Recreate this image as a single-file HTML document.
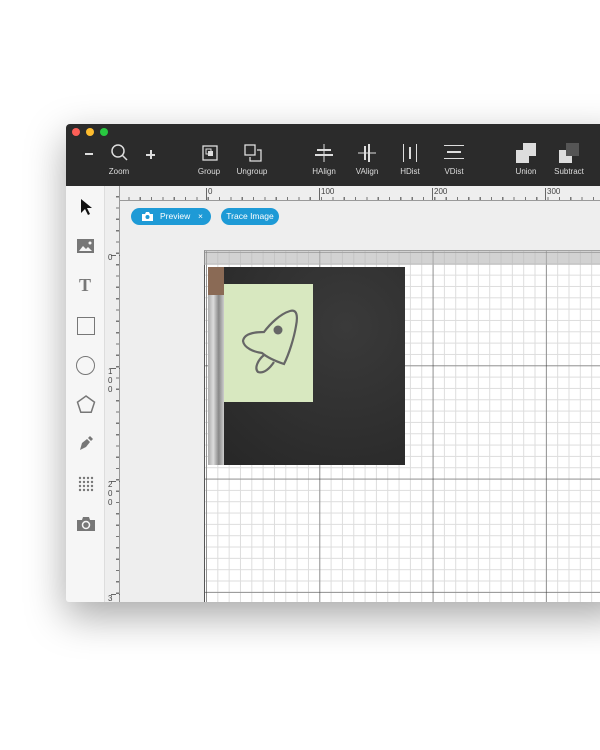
<!DOCTYPE html>
<html><head><meta charset="utf-8"><style>
*{margin:0;padding:0;box-sizing:border-box}
body{width:600px;height:750px;background:#fff;position:relative;overflow:hidden;font-family:"Liberation Sans",sans-serif}
.win{position:absolute;left:66px;top:124px;width:560px;height:478px;background:#eeeeee;box-shadow:0 14px 40px rgba(0,0,0,.35);border-radius:4px 0 0 3px;overflow:hidden}
.tb{position:absolute;left:0;top:0;right:0;height:62px;background:#2b2b2b}
.dot{position:absolute;top:4px;width:8px;height:8px;border-radius:50%}
.lbl{position:absolute;top:43px;color:#ddd;font-size:8px;transform:translateX(-50%);white-space:nowrap}
.ic{position:absolute}
.left{position:absolute;left:0;top:62px;width:39px;bottom:0;background:#f6f6f6;border-right:1px solid #ddd}
.vr{position:absolute;left:39px;top:62px;width:15px;bottom:0;background:#eee;border-right:1px solid #999}
.hr{position:absolute;left:54px;top:62px;right:0;height:15px;background:#eee;border-bottom:1px solid #999}
.pill{position:absolute;top:84px;height:17px;border-radius:9px;background:#1e9ad6;color:#fff;font-size:8.5px;line-height:17px}
.ws{position:absolute;left:138px;top:126px;right:0;bottom:0;background-color:#fff;border-left:1px solid #555;border-top:1px solid #888;
background-image:linear-gradient(90deg,rgba(0,0,0,.35) 1px,transparent 1px),linear-gradient(rgba(0,0,0,.35) 1px,transparent 1px),linear-gradient(90deg,#ddd 1px,transparent 1px),linear-gradient(#ddd 1px,transparent 1px);
background-size:113.3px 113.3px,113.3px 113.3px,11.33px 11.33px,11.33px 11.33px;background-position:1px 0,0 1px,1px 0,0 1px}
.band{position:absolute;left:138px;top:126px;right:0;height:15px;background:rgba(180,180,180,.6)}
.img{position:absolute;left:142px;top:143px;width:197px;height:198px;background:#2b2b2b;background-image:radial-gradient(circle at 70% 30%,#3a3a3a,#262626)}
.tk{position:absolute;background:#666}
</style></head><body>
<div class="win">
<div class="tb">
<div class="dot" style="left:6px;background:#fc5f57"></div>
<div class="dot" style="left:20px;background:#fdbc2e"></div>
<div class="dot" style="left:34px;background:#28c840"></div>
<div class="ic" style="left:19px;top:29px;width:8px;height:1.5px;background:#ddd"></div>
<svg class="ic" style="left:44px;top:19px" width="20" height="20"><circle cx="8" cy="8" r="6" fill="none" stroke="#ddd" stroke-width="1.5"/><line x1="12.5" y1="12.5" x2="17" y2="17" stroke="#ddd" stroke-width="1.5"/></svg>
<div class="ic" style="left:80px;top:30px;width:9px;height:1.5px;background:#ddd"></div><div class="ic" style="left:84px;top:26px;width:1.5px;height:9px;background:#ddd"></div>
<div class="lbl" style="left:53px">Zoom</div>
<svg class="ic" style="left:136px;top:21px" width="16" height="16"><rect x="1" y="1" width="14" height="14" fill="none" stroke="#ddd" stroke-width="1.3"/><rect x="4" y="4" width="5" height="5" fill="none" stroke="#ddd"/><rect x="6" y="6" width="5" height="5" fill="#ddd"/></svg>
<div class="lbl" style="left:143px">Group</div>
<svg class="ic" style="left:178px;top:20px" width="18" height="18"><rect x="1" y="1" width="10" height="10" fill="none" stroke="#ddd" stroke-width="1.3"/><path d="M13 6h4v11H6v-4" fill="none" stroke="#ddd" stroke-width="1.3"/></svg>
<div class="lbl" style="left:186px">Ungroup</div>
<svg class="ic" style="left:248px;top:20px" width="20" height="18"><line x1="10" y1="0" x2="10" y2="18" stroke="#ddd"/><rect x="3" y="5" width="14" height="2" fill="#ddd"/><rect x="1" y="10" width="18" height="2" fill="#ddd"/></svg>
<div class="lbl" style="left:258px">HAlign</div>
<svg class="ic" style="left:292px;top:19px" width="18" height="20"><line x1="0" y1="10" x2="18" y2="10" stroke="#ddd"/><rect x="6" y="3" width="2" height="14" fill="#ddd"/><rect x="10" y="1" width="2" height="18" fill="#ddd"/></svg>
<div class="lbl" style="left:301px">VAlign</div>
<svg class="ic" style="left:336px;top:19px" width="16" height="20"><rect x="1" y="1" width="1" height="18" fill="#ddd"/><rect x="7" y="4" width="2" height="12" fill="#ddd"/><rect x="14" y="1" width="1" height="18" fill="#ddd"/></svg>
<div class="lbl" style="left:344px">HDist</div>
<svg class="ic" style="left:378px;top:20px" width="20" height="16"><rect x="0" y="1" width="20" height="1" fill="#ddd"/><rect x="3" y="7" width="14" height="2" fill="#ddd"/><rect x="0" y="14" width="20" height="1" fill="#ddd"/></svg>
<div class="lbl" style="left:388px">VDist</div>
<svg class="ic" style="left:450px;top:19px" width="20" height="20"><path d="M7 0h13v13h-7v7H0V7h7z" fill="#ddd"/></svg>
<div class="lbl" style="left:460px">Union</div>
<svg class="ic" style="left:493px;top:19px" width="20" height="20"><rect x="7" y="0" width="13" height="13" fill="#555"/><path d="M0 7h7v6h6v7H0z" fill="#ddd"/></svg>
<div class="lbl" style="left:503px">Subtract</div>
<div class="lbl" style="left:534px;transform:none">In</div>
</div>
<div class="left">
<svg class="ic" style="left:14px;top:12px" width="12" height="18"><path d="M1 1v14l4-4 3 6 2-1-3-6h5z" fill="#111"/></svg>
<svg class="ic" style="left:11px;top:53px" width="17" height="14"><rect x="0" y="0" width="17" height="14" fill="#777"/><path d="M2 12l4-5 3 3 2-2 4 4z" fill="#f6f6f6"/><circle cx="13" cy="4" r="1.5" fill="#f6f6f6"/></svg>
<div class="ic" style="left:13px;top:89px;font:bold 18px 'Liberation Serif',serif;color:#777">T</div>
<div class="ic" style="left:11px;top:131px;width:18px;height:18px;border:1.5px solid #777"></div>
<div class="ic" style="left:10px;top:170px;width:19px;height:19px;border:1.5px solid #777;border-radius:50%"></div>
<svg class="ic" style="left:10px;top:209px" width="20" height="19"><path d="M10 1l8.5 6.2-3.3 10H4.8L1.5 7.2z" fill="none" stroke="#777" stroke-width="1.5"/></svg>
<svg class="ic" style="left:12px;top:249px" width="16" height="16"><path d="M2 15l2-7 5-4 3 3-4 5z" fill="#777"/><path d="M10 3l2-2 3 3-2 2z" fill="#777"/></svg>
<svg class="ic" style="left:12px;top:290px" width="16" height="16" fill="#777"><g><circle cx="2" cy="2" r="1.2"/><circle cx="6" cy="2" r="1.2"/><circle cx="10" cy="2" r="1.2"/><circle cx="14" cy="2" r="1.2"/><circle cx="2" cy="6" r="1.2"/><circle cx="6" cy="6" r="1.2"/><circle cx="10" cy="6" r="1.2"/><circle cx="14" cy="6" r="1.2"/><circle cx="2" cy="10" r="1.2"/><circle cx="6" cy="10" r="1.2"/><circle cx="10" cy="10" r="1.2"/><circle cx="14" cy="10" r="1.2"/><circle cx="2" cy="14" r="1.2"/><circle cx="6" cy="14" r="1.2"/><circle cx="10" cy="14" r="1.2"/><circle cx="14" cy="14" r="1.2"/></g></svg>
<svg class="ic" style="left:11px;top:331px" width="18" height="14"><path d="M0 3h5l1-3h6l1 3h5v11H0z" fill="#777"/><circle cx="9" cy="8" r="3.5" fill="none" stroke="#f6f6f6" stroke-width="1.5"/></svg>
</div>
<div class="vr">
<div class="tk" style="left:6px;top:69px;width:9px;height:1px"></div><div style="position:absolute;left:3px;top:67px;font-size:8px;color:#444">0</div>
<div class="tk" style="left:6px;top:182px;width:9px;height:1px"></div><div style="position:absolute;left:3px;top:181px;font-size:8px;color:#444;line-height:9px">1<br>0<br>0</div>
<div class="tk" style="left:6px;top:295px;width:9px;height:1px"></div><div style="position:absolute;left:3px;top:294px;font-size:8px;color:#444;line-height:9px">2<br>0<br>0</div>
<div class="tk" style="left:6px;top:408px;width:9px;height:1px"></div><div style="position:absolute;left:3px;top:408px;font-size:8px;color:#444">3</div>
<div style="position:absolute;left:11px;top:0;width:3px;height:100%;background:repeating-linear-gradient(#eee 0 10px,#777 10px 11.33px)"></div>
</div>
<div class="hr">
<div style="position:absolute;left:0;top:11px;width:100%;height:3px;background:repeating-linear-gradient(90deg,#777 0 1.2px,transparent 1.2px 11.33px);background-position:-3px 0"></div>
<div class="tk" style="left:86px;top:2px;width:1px;height:12px"></div><div style="position:absolute;left:88px;top:1px;font-size:8px;color:#444">0</div>
<div class="tk" style="left:199px;top:2px;width:1px;height:12px"></div><div style="position:absolute;left:201px;top:1px;font-size:8px;color:#444">100</div>
<div class="tk" style="left:312px;top:2px;width:1px;height:12px"></div><div style="position:absolute;left:314px;top:1px;font-size:8px;color:#444">200</div>
<div class="tk" style="left:425px;top:2px;width:1px;height:12px"></div><div style="position:absolute;left:427px;top:1px;font-size:8px;color:#444">300</div>
</div>
<div class="pill" style="left:65px;width:80px"><svg style="position:absolute;left:11px;top:4px" width="11" height="9"><path d="M0 2h3l1-2h3l1 2h3v7H0z" fill="#fff"/><circle cx="5.5" cy="5" r="2" fill="#1e9ad6"/></svg><span style="position:absolute;left:29px">Preview</span><span style="position:absolute;left:67px">×</span></div>
<div class="pill" style="left:155px;width:58px;text-align:center">Trace Image</div>
<div class="ws"></div>
<div class="band"></div>
<div class="img">
<div style="position:absolute;left:0;top:0;width:16px;height:198px;background:linear-gradient(90deg,#aaa,#ddd,#888,#ccc)"></div>
<div style="position:absolute;left:0;top:0;width:16px;height:28px;background:#8a6a55"></div>
<div style="position:absolute;left:16px;top:17px;width:89px;height:118px;background:#d8e8c0"></div>
<svg style="position:absolute;left:32px;top:41px" width="62" height="72"><path d="M50 3C57 1 58 8 56 18C54 30 49 46 44 56C38 54 28 50 22 45C14 44 4 40 3 33C4 26 14 24 24 24C30 16 40 6 50 3Z" fill="none" stroke="#666" stroke-width="2.2"/><path d="M24 47C18 52 14 60 18 64C24 66 30 60 34 54" fill="none" stroke="#666" stroke-width="2.2"/><circle cx="38" cy="22" r="4.5" fill="#666"/></svg>
</div>
</div>
</body></html>
